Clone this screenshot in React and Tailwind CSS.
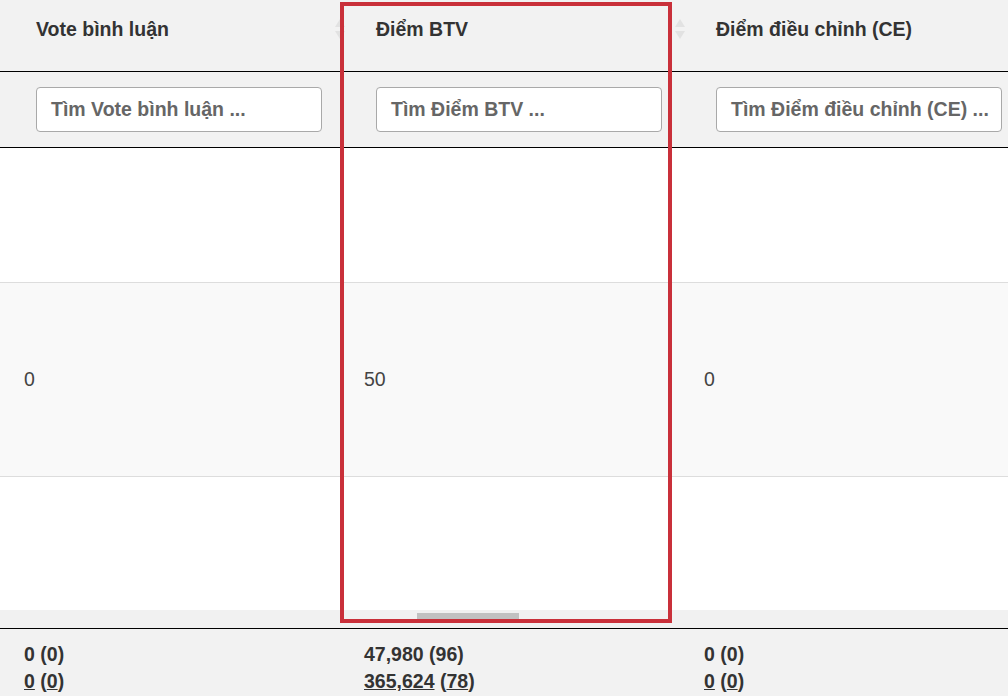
import React from "react";

const cols = [
  { title: "Vote bình luận", value: "0", sum: ["0", "0"], sum2: ["0", "0"] },
  { title: "Điểm BTV", value: "50", sum: ["47,980", "96"], sum2: ["365,624", "78"] },
  { title: "Điểm điều chỉnh (CE)", value: "0", sum: ["0", "0"], sum2: ["0", "0"] },
];

function SortIcon() {
  return (
    <svg width="12" height="22" viewBox="0 0 12 22" className="absolute right-[-6px] top-[18px]">
      <path d="M6 1 L11 9 L1 9 Z" fill="#e2e2e2" />
      <path d="M6 21 L11 13 L1 13 Z" fill="#e2e2e2" />
    </svg>
  );
}

export default function App() {
  return (
    <div
      className="relative w-[1008px] h-[696px] overflow-hidden bg-white text-[#333]"
      style={{ fontFamily: '"Liberation Sans", Arial, sans-serif' }}
    >
      <div className="flex flex-col w-[1360px] h-full">
        {/* header */}
        <div className="flex h-[72px] shrink-0 bg-[#f2f2f2] border-b border-black">
          {cols.map((c) => (
            <div key={c.title} className="relative w-[340px] pl-9 pt-[15px] text-[19.5px] font-bold">
              {c.title}
              <SortIcon />
            </div>
          ))}
        </div>
        {/* filter row */}
        <div className="flex h-[76px] shrink-0 bg-[#f2f2f2] border-b border-black">
          {cols.map((c) => (
            <div key={c.title} className="w-[340px] pl-9 pt-[15px]">
              <div className="w-[286px] h-[45px] bg-white border border-[#a9a9a9] rounded-[4px] pl-[14px] flex items-center text-[19.5px] font-bold text-[#666] whitespace-nowrap overflow-hidden">
                Tìm {c.title} ...
              </div>
            </div>
          ))}
        </div>
        {/* rows */}
        <div className="flex h-[135px] shrink-0 bg-white border-b border-[#ddd]" />
        <div className="flex h-[194px] shrink-0 bg-[#f9f9f9] border-b border-[#ddd] items-center">
          {cols.map((c) => (
            <div key={c.title} className="w-[340px] pl-6 text-[19.5px] text-[#444]">
              {c.value}
            </div>
          ))}
        </div>
        <div className="flex h-[133px] shrink-0 bg-white" />
        {/* scrollbar */}
        <div className="h-[19px] shrink-0 bg-[#f1f1f1] border-b border-black pl-[417px] pt-[3px] w-[1008px]">
          <div className="w-[102px] h-[8px] bg-[#c1c1c1]" />
        </div>
        {/* footer */}
        <div className="flex flex-1 bg-[#f2f2f2] pt-[12px]">
          {cols.map((c) => (
            <div key={c.title} className="w-[340px] pl-6 text-[19.5px] font-bold leading-[27px]">
              <div>
                {c.sum[0]} ({c.sum[1]})
              </div>
              <div>
                <span className="underline">{c.sum2[0]}</span> (<span className="underline">{c.sum2[1]}</span>)
              </div>
            </div>
          ))}
        </div>
      </div>
      {/* highlight box */}
      <div className="absolute left-[340px] top-[2px] w-[332px] h-[621px] border-[4px] border-[#c9303a]" />
    </div>
  );
}
